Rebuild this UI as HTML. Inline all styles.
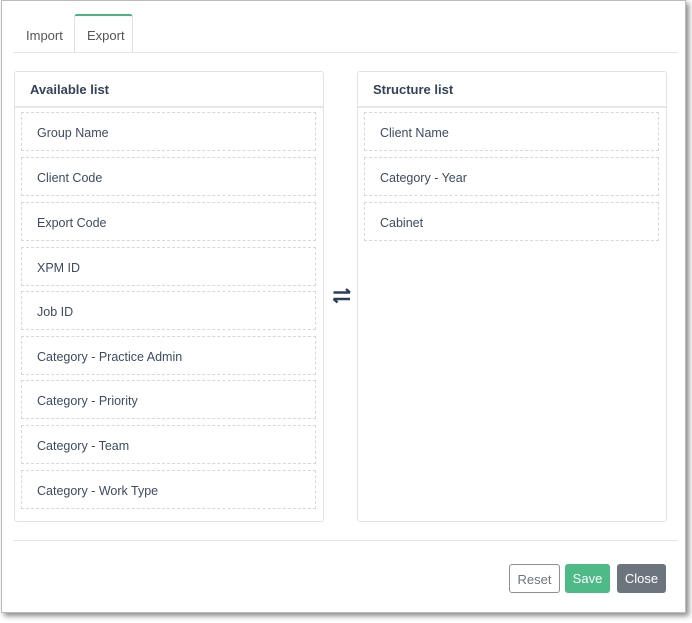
<html><head><style>
body{margin:0;width:692px;height:623px;background:#fff;font-family:"Liberation Sans",sans-serif;position:relative;overflow:hidden}
.dlg{position:absolute;left:1px;top:0;width:683px;height:611px;background:#fff;border:1px solid #bbb;box-shadow:3px 3px 5px rgba(0,0,0,.45)}
.a{position:absolute}
.tab{font-size:13px;color:#555}
.panel{position:absolute;top:71px;width:308px;height:449px;border:1px solid #dfe2e6;border-radius:3px}
.ph{height:34px;border-bottom:2px solid #e6e8eb;font-size:13px;font-weight:bold;color:#34425a;line-height:35px;padding-left:15px}
.it{position:absolute;left:6px;height:37px;border:1px dashed #d5d8dc;font-size:12.5px;color:#3d4b63;line-height:40px;padding-left:15px;box-sizing:content-box;width:278px}
.btn{position:absolute;top:564px;height:29px;border-radius:3px;font-size:13px;line-height:29px;text-align:center;box-sizing:border-box}
</style></head><body>
<div class="dlg"></div>
<div class="a tab" style="left:26px;top:28px">Import</div>
<div class="a" style="left:74px;top:14px;width:59px;height:39px;border:1px solid #dee2e6;border-bottom:none;border-top:2px solid #48b57f;background:#fff;box-sizing:border-box;border-radius:3px 3px 0 0"></div>
<div class="a tab" style="left:87px;top:28px">Export</div>
<div class="a" style="left:13px;top:52px;width:665px;height:1px;background:#e3e5e8"></div>
<div class="panel" style="left:14px"><div class="ph">Available list</div>
<div class="it" style="top:40px">Group Name</div>
<div class="it" style="top:85px">Client Code</div>
<div class="it" style="top:130px">Export Code</div>
<div class="it" style="top:175px">XPM ID</div>
<div class="it" style="top:219px">Job ID</div>
<div class="it" style="top:264px">Category - Practice Admin</div>
<div class="it" style="top:308px">Category - Priority</div>
<div class="it" style="top:353px">Category - Team</div>
<div class="it" style="top:398px">Category - Work Type</div>
</div>
<svg class="a" style="left:332px;top:288px" width="20" height="16" viewBox="0 0 20 16"><path d="M1.5 4.5H18M14 1L18 4.5M1.5 11H18M5.5 14.5L1.5 11" stroke="#2c3e5c" stroke-width="2.4" fill="none"/></svg>
<div class="panel" style="left:357px"><div class="ph">Structure list</div>
<div class="it" style="top:40px">Client Name</div>
<div class="it" style="top:85px">Category - Year</div>
<div class="it" style="top:130px">Cabinet</div>
</div>
<div class="a" style="left:13px;top:540px;width:665px;height:1px;background:#e3e5e8"></div>
<div class="btn" style="left:509px;width:51px;border:1px solid #8a9096;color:#6c757d">Reset</div>
<div class="btn" style="left:565px;width:45px;background:#4dba87;color:#fff">Save</div>
<div class="btn" style="left:617px;width:49px;background:#6c757d;color:#fff">Close</div>
</body></html>
